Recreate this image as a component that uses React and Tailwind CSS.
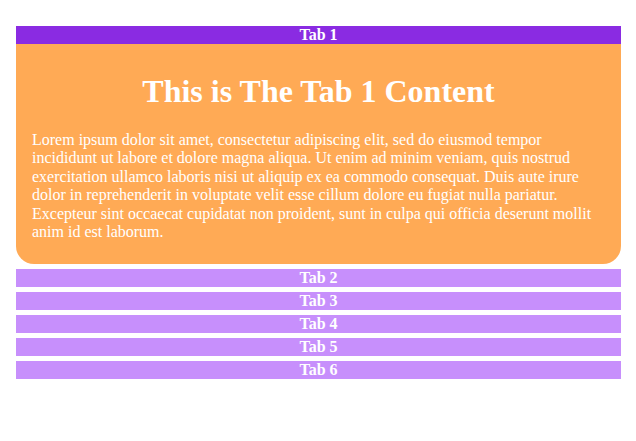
import { useState } from "react";

const TABS = [
  {
    id: 1,
    title: "Tab 1",
    heading: "This is The Tab 1 Content",
    body:
      "Lorem ipsum dolor sit amet, consectetur adipiscing elit, sed do eiusmod tempor incididunt ut labore et dolore magna aliqua. Ut enim ad minim veniam, quis nostrud exercitation ullamco laboris nisi ut aliquip ex ea commodo consequat. Duis aute irure dolor in reprehenderit in voluptate velit esse cillum dolore eu fugiat nulla pariatur. Excepteur sint occaecat cupidatat non proident, sunt in culpa qui officia deserunt mollit anim id est laborum.",
  },
  { id: 2, title: "Tab 2" },
  { id: 3, title: "Tab 3" },
  { id: 4, title: "Tab 4" },
  { id: 5, title: "Tab 5" },
  { id: 6, title: "Tab 6" },
];

export default function App() {
  const [open, setOpen] = useState(1);

  return (
    <div className="min-h-screen bg-white pt-[26px] font-['Liberation_Serif','Times_New_Roman',serif] text-white">
      <div className="ml-4 flex w-[605px] flex-col">
        {TABS.map((tab) => {
          const active = tab.id === open;
          return (
            <div key={tab.id} className="mb-[5px]">
              <button
                type="button"
                onClick={() => setOpen(tab.id)}
                className={
                  active
                    ? "block h-[18px] w-full bg-[#8a2be2] text-center text-base font-bold leading-[18px]"
                    : "block h-[18px] w-full bg-[#c78ffc] text-center text-base font-bold leading-[18px]"
                }
              >
                {tab.title}
              </button>
              {active && tab.heading && (
                <div className="rounded-b-[18px] bg-[#ffaa55] px-4 pt-2 pb-[7px]">
                  <h1 className="my-[21px] text-center text-[32px] font-bold leading-[37px]">
                    {tab.heading}
                  </h1>
                  <p className="mb-4 text-base leading-[18.4px]">{tab.body}</p>
                </div>
              )}
            </div>
          );
        })}
      </div>
    </div>
  );
}
